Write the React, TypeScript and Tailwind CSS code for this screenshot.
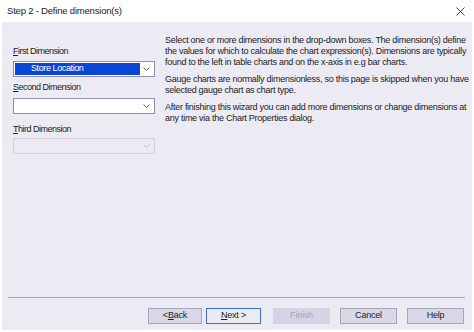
import React from "react";

const Chevron = ({ color = "#666" }: { color?: string }) => (
  <svg width="7" height="4" viewBox="0 0 7 4" fill="none">
    <path d="M0.5 0.5 L3.5 3.5 L6.5 0.5" stroke={color} strokeWidth="1" />
  </svg>
);

const Btn = ({ children, cls = "" }: { children: React.ReactNode; cls?: string }) => (
  <div className={`h-[16px] flex items-center justify-center text-[9px] tracking-[-0.2px] border ${cls}`}>{children}</div>
);

export default function App() {
  return (
    <div className="w-[474px] h-[332px] bg-white flex flex-col" style={{ fontFamily: '"Liberation Sans", Arial, sans-serif' }}>
      <div className="h-[22px] flex items-center justify-between pl-[7px] pr-[9px] text-[9.5px] tracking-[-0.2px] text-[#222]">
        <span>Step 2 - Define dimension(s)</span>
        <svg width="9" height="9" viewBox="0 0 9 9"><path d="M0.5 0.5 L8.5 8.5 M8.5 0.5 L0.5 8.5" stroke="#444" strokeWidth="1" /></svg>
      </div>
      <div className="mx-[2px] mb-[2px] flex-1 bg-[#ecebf3] flex flex-col">
        <div className="flex flex-1">
          <div className="w-[163px] shrink-0 pl-[11px] pt-[23px] flex flex-col text-[9px] tracking-[-0.5px] text-[#222]">
            <div className="h-[12px] leading-[12px]"><u>F</u>irst Dimension</div>
            <div className="mt-[4px] w-[142px] h-[16px] bg-white border border-[#8f8fa6] flex items-center p-[1px]">
              <div className="w-[125px] h-full bg-[#0a46d6] text-white pl-[16px] flex items-center tracking-[-0.4px]">Store Location</div>
              <div className="flex-1 flex justify-center"><Chevron /></div>
            </div>
            <div className="mt-[4px] h-[12px] leading-[12px]"><u>S</u>econd Dimension</div>
            <div className="mt-[5px] w-[142px] h-[16px] bg-white border border-[#8f8fa6] flex items-center justify-end">
              <div className="w-[15px] flex justify-center"><Chevron /></div>
            </div>
            <div className="mt-[9px] h-[12px] leading-[12px]"><u>T</u>hird Dimension</div>
            <div className="mt-[3px] w-[142px] h-[16px] bg-[#ecebf3] border border-[#d3d2de] flex items-center justify-end">
              <div className="w-[15px] flex justify-center"><Chevron color="#bdbdc8" /></div>
            </div>
          </div>
          <div className="flex-1 min-w-0 pt-[13px] text-[9px] leading-[11px] tracking-[-0.27px] text-[#222] whitespace-nowrap flex flex-col gap-[6px]">
            <p>Select one or more dimensions in the drop-down boxes. The dimension(s) define<br />the values for which to calculate the chart expression(s). Dimensions are typically<br />found to the left in table charts and on the x-axis in e.g bar charts.</p>
            <p>Gauge charts are normally dimensionless, so this page is skipped when you have<br />selected gauge chart as chart type.</p>
            <p>After finishing this wizard you can add more dimensions or change dimensions at<br />any time via the Chart Properties dialog.</p>
          </div>
        </div>
        <div className="ml-[6px] mr-[7px] h-px bg-[#a6a6ba]" />
        <div className="h-[32px] pt-[10px] pr-[8px] flex items-start justify-end">
          <Btn cls="w-[54px] bg-[#d8d8e6] border-[#a6a6ba] text-[#222]">&lt; <u>B</u>ack</Btn>
          <Btn cls="w-[55px] ml-[4px] bg-[#ecebf3] border-[#3a6fd6] text-[#222]"><u>N</u>ext &gt;</Btn>
          <Btn cls="w-[57px] ml-[12px] bg-[#d5d4e5] border-[#d5d4e5] text-[#a3a3b8]">Finish</Btn>
          <Btn cls="w-[57px] ml-[10px] bg-[#d8d8e6] border-[#a6a6ba] text-[#222]">Cancel</Btn>
          <Btn cls="w-[57px] ml-[10px] bg-[#d8d8e6] border-[#a6a6ba] text-[#222]">Help</Btn>
        </div>
      </div>
    </div>
  );
}
